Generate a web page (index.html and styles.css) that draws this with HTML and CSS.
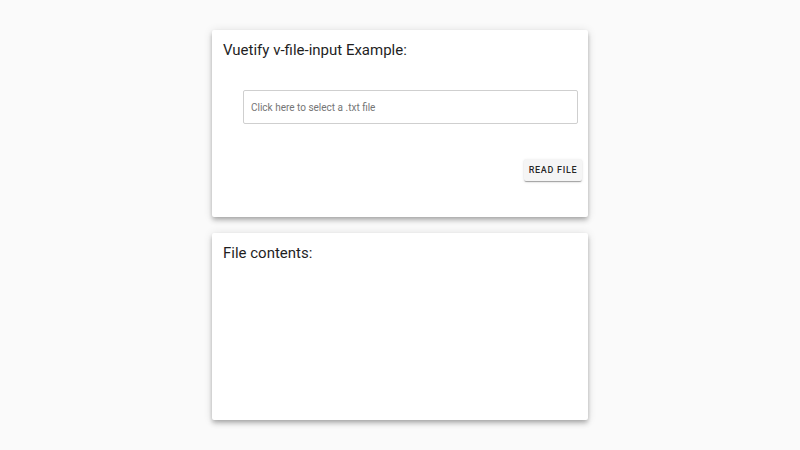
FILE: index.html
```html
<!DOCTYPE html>
<html>
<head>
<meta charset="utf-8">
<link rel="stylesheet" href="styles.css">
</head>
<body>
<div class="page">
  <div class="card card-top">
    <div class="title">Vuetify v-file-input Example:</div>
    <div class="field-row">
      <div class="field">Click here to select a .txt file</div>
    </div>
    <div class="actions">
      <button class="btn">READ FILE</button>
    </div>
  </div>
  <div class="card card-bottom">
    <div class="title">File contents:</div>
  </div>
</div>
</body>
</html>
```

FILE: styles.css
```css
html, body {
  margin: 0;
  padding: 0;
  background: #fafafa;
  font-family: Roboto, "Noto Sans", Arial, sans-serif;
  color: rgba(0,0,0,0.87);
}
.page {
  display: flex;
  flex-direction: column;
  align-items: center;
  padding: 30px 0 30px;
  gap: 16px;
}
.card {
  width: 376px;
  height: 187px;
  background: #fff;
  border-radius: 2px;
  box-shadow: 0 2px 4px -1px rgba(0,0,0,.2), 0 4px 5px 0 rgba(0,0,0,.14), 0 1px 10px 0 rgba(0,0,0,.12);
  box-sizing: border-box;
  padding: 10px 0 0 11px;
  display: flex;
  flex-direction: column;
}
.title {
  font-size: 15px;
  line-height: 20px;
  letter-spacing: 0;
  color: #1f1f1f;
}
.field-row {
  padding: 30px 0 0 20px;
}
.field {
  width: 335px;
  height: 34px;
  box-sizing: border-box;
  border: 1px solid #cfcfcf;
  border-radius: 2px;
  font-size: 10px;
  color: #757575;
  padding-left: 7px;
  display: flex;
  align-items: center;
}
.actions {
  display: flex;
  justify-content: flex-end;
  padding-top: 35px;
  width: 359px;
}
.btn {
  height: 22px;
  width: 58px;
  padding: 0;
  border: none;
  border-radius: 2px;
  background: #f5f5f5;
  font-family: Roboto, Arial, sans-serif;
  font-size: 9px;
  font-weight: 500;
  letter-spacing: 0.7px;
  color: rgba(0,0,0,0.87);
  box-shadow: 0 2px 1px -1px rgba(0,0,0,.2), 0 1px 1px 0 rgba(0,0,0,.14), 0 1px 3px 0 rgba(0,0,0,.12);
}
```
